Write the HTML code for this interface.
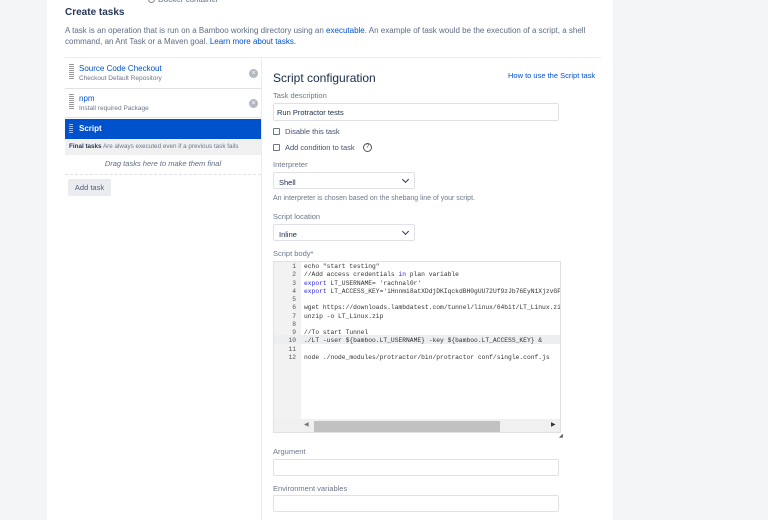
<!DOCTYPE html>
<html><head><meta charset="utf-8"><style>
*{margin:0;padding:0;box-sizing:border-box}
body{width:768px;height:520px;overflow:hidden;background:#f4f5f7;font-family:"Liberation Sans",sans-serif;color:#172b4d;position:relative}
.a{position:absolute;white-space:nowrap}
#panel{position:absolute;left:47px;top:0;width:566px;height:520px;background:#fff}
.t8{font-size:8px;color:#5e6c84}
.lnk{color:#0052cc}
.inp{position:absolute;border:1px solid #dfe1e6;border-radius:2px;background:#fff}
.lbl{font-size:7.5px;color:#6b778c}
.cb{position:absolute;width:7px;height:7px;border:1px solid #6b778c;border-radius:1px;background:#fff}
.grip{position:absolute;width:5px;height:16px;background:repeating-linear-gradient(#999 0 1px,transparent 1px 2px),#fff}
.x{position:absolute;width:9px;height:9px;border-radius:50%;background:#b3b8c2;color:#fff;font-size:7px;line-height:9px;text-align:center}
.code{font-family:"Liberation Mono",monospace;font-size:6.3px;line-height:8.27px;color:#333}
.kw{color:#2a2ae0}
.sel{position:absolute;border:1px solid #dfe1e6;border-radius:2px;background:#fff;font-size:7.5px;color:#172b4d;padding:5px 0 0 5px}
.chev{position:absolute;right:6px;top:4px;width:5px;height:5px;border-right:1.5px solid #253858;border-bottom:1.5px solid #253858;transform:rotate(45deg)}
</style></head><body>
<div id="panel"></div>
<div class="a" style="left:148px;top:-4px;width:7px;height:7px;border:1px solid #888;border-radius:50%"></div>
<div class="a t8" style="left:158px;top:-5px">Docker container</div>
<div class="a" style="left:65px;top:7px;font-size:10px;font-weight:bold;color:#253858">Create tasks</div>
<div class="a t8" style="left:65px;top:26px">A task is an operation that is run on a Bamboo working directory using an <span class="lnk">executable</span>. An example of task would be the execution of a script, a shell</div>
<div class="a t8" style="left:65px;top:37px">command, an Ant Task or a Maven goal. <span class="lnk">Learn more about tasks.</span></div>
<div class="a" style="left:65px;top:57px;width:536px;height:1px;background:#ebecf0"></div>

<div class="a" style="left:261px;top:58px;width:1px;height:462px;background:#ebecf0"></div>
<div class="a" style="left:65px;top:88px;width:196px;height:1px;background:#dfe1e6"></div>
<div class="a" style="left:65px;top:117px;width:196px;height:1px;background:#dfe1e6"></div>
<div class="grip" style="left:69px;top:64px"></div>
<div class="a" style="left:79px;top:64px;font-size:8px;color:#0052cc">Source Code Checkout</div>
<div class="a" style="left:79px;top:75px;font-size:6.5px;color:#6b778c">Checkout Default Repository</div>
<div class="x" style="left:249px;top:69px">×</div>
<div class="grip" style="left:69px;top:94px"></div>
<div class="a" style="left:79px;top:94px;font-size:8px;color:#0052cc">npm</div>
<div class="a" style="left:79px;top:105px;font-size:6.5px;color:#6b778c">Install required Package</div>
<div class="x" style="left:249px;top:99px">×</div>
<div class="a" style="left:65px;top:119px;width:196px;height:20px;background:#0052cc"></div>
<div class="a" style="left:69px;top:124px;width:4px;height:10px;background:repeating-linear-gradient(#9fb8e8 0 1px,transparent 1px 2px)"></div>
<div class="a" style="left:79px;top:124px;font-size:8px;font-weight:bold;color:#fff">Script</div>
<div class="a" style="left:65px;top:139px;width:196px;height:16px;background:#f0f0f0"></div>
<div class="a" style="left:69px;top:143px;font-size:6.3px;color:#6b778c"><b style="color:#253858">Final tasks</b> Are always executed even if a previous task fails</div>
<div class="a" style="left:65px;top:159px;width:196px;text-align:center;font-size:7.5px;font-style:italic;color:#5e6c84">Drag tasks here to make them final</div>
<div class="a" style="left:65px;top:174px;width:196px;border-top:1px dashed #dfe1e6"></div>
<div class="a" style="left:68px;top:179px;width:43px;height:17px;background:#ebecf0;border-radius:2px;font-size:7.5px;color:#505f79;text-align:center;line-height:17px">Add task</div>

<div class="a" style="left:273px;top:71px;font-size:12px;color:#172b4d">Script configuration</div>
<div class="a" style="left:508px;top:71px;font-size:7.5px;color:#0052cc">How to use the Script task</div>
<div class="a lbl" style="left:273px;top:91px">Task description</div>
<div class="inp" style="left:273px;top:103px;width:286px;height:18px"></div>
<div class="a" style="left:277px;top:108px;font-size:7.5px">Run Protractor tests</div>
<div class="cb" style="left:273px;top:128px"></div>
<div class="a" style="left:285px;top:127px;font-size:7.5px;color:#42526e">Disable this task</div>
<div class="cb" style="left:273px;top:144px"></div>
<div class="a" style="left:285px;top:143px;font-size:7.5px;color:#42526e">Add condition to task</div>
<div class="a" style="left:363px;top:143px;width:9px;height:9px;border:1px solid #555;border-radius:50%;font-size:6px;line-height:7px;text-align:center;color:#444">?</div>
<div class="a lbl" style="left:273px;top:160px">Interpreter</div>
<div class="sel" style="left:273px;top:172px;width:142px;height:17px">Shell<span class="chev"></span></div>
<div class="a" style="left:273px;top:195px;font-size:7px;color:#6b778c">An interpreter is chosen based on the shebang line of your script.</div>
<div class="a lbl" style="left:273px;top:212px">Script location</div>
<div class="sel" style="left:273px;top:224px;width:142px;height:17px">Inline<span class="chev"></span></div>
<div class="a lbl" style="left:273px;top:249px">Script body*</div>

<div class="a" style="left:273px;top:261px;width:288px;height:172px;border:1px solid #dfe1e6;background:#fff;overflow:hidden">
 <div class="a" style="left:0;top:0;width:27px;height:172px;background:#f2f2f2"></div>
 <div class="a" style="left:0;top:73px;width:288px;height:9px;background:#eceef0"></div>
 <div class="a code" style="left:0;top:1px;width:22px;text-align:right;color:#555">1<br>2<br>3<br>4<br>5<br>6<br>7<br>8<br>9<br>10<br>11<br>12</div>
 <div class="a code" style="left:30px;top:1px">echo "start testing"<br>//Add access credentials <span class="kw">in</span> plan variable<br><span class="kw">export</span> LT_USERNAME= 'rachnal0r'<br><span class="kw">export</span> LT_ACCESS_KEY='iHnnmi8atXDdjDKIqckdBH0gUU72Uf9zJb76EyN1XjzvGP<br>&nbsp;<br>wget https://downloads.lambdatest.com/tunnel/linux/64bit/LT_Linux.zi<br>unzip -o LT_Linux.zip<br>&nbsp;<br>//To start Tunnel<br>./LT -user ${bamboo.LT_USERNAME} -key ${bamboo.LT_ACCESS_KEY} &amp;<br>&nbsp;<br>node ./node_modules/protractor/bin/protractor conf/single.conf.js</div>
 <div class="a" style="left:0;top:157px;width:288px;height:14px;background:#f0f0f0"></div>
 <div class="a" style="left:40px;top:159px;width:186px;height:11px;background:#c1c1c1"></div>
 <div class="a" style="left:30px;top:159px;font-size:6px;color:#777">◀</div>
 <div class="a" style="left:277px;top:159px;font-size:6px;color:#333">▶</div>
</div>
<div class="a" style="left:559px;top:433px;font-size:5px;color:#555">◢</div>

<div class="a lbl" style="left:273px;top:447px">Argument</div>
<div class="inp" style="left:273px;top:459px;width:286px;height:17px"></div>
<div class="a lbl" style="left:273px;top:484px">Environment variables</div>
<div class="inp" style="left:273px;top:495px;width:286px;height:17px"></div>
</body></html>
